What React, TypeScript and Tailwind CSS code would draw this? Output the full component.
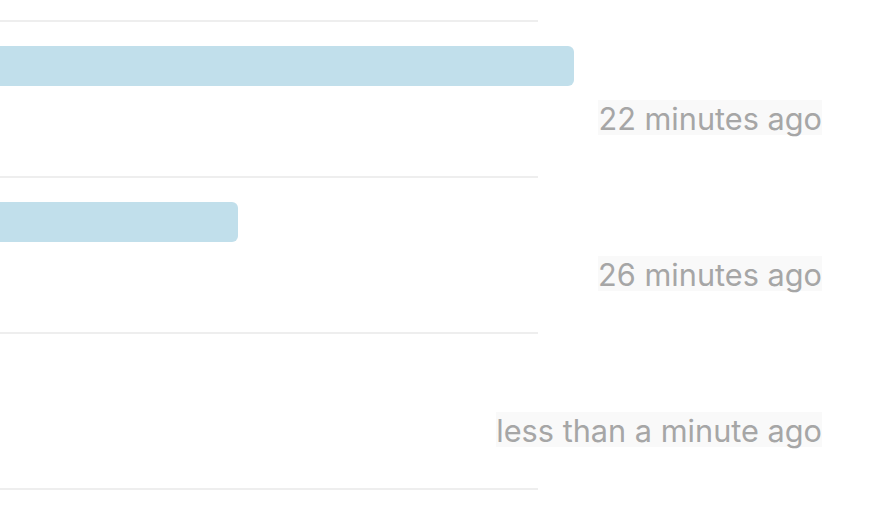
const ROWS = [
  { bar: 574, time: "22 minutes ago" },
  { bar: 238, time: "26 minutes ago" },
  { bar: 0, time: "less than a minute ago" },
];

export default function App() {
  return (
    <div className="w-[878px] h-[530px] overflow-hidden bg-white pt-[20px] font-['Inter',sans-serif]">
      {ROWS.map((r, i) => (
        <div key={i} className="flex flex-col w-[822px] h-[156px]">
          <div className="w-[538px] h-[2px] bg-[#eeeeee]" />
          <div className="mt-[24px] h-[40px]">
            {r.bar > 0 && (
              <div className="h-[40px] bg-[#c1dfeb] rounded-r-[6px]" style={{ width: r.bar }} />
            )}
          </div>
          <div className="mt-[14px] self-end h-[35px] bg-[#f9f9f9] text-[30.7px] leading-[37px] text-[#a6a6a6] whitespace-nowrap">
            {r.time}
          </div>
        </div>
      ))}
      <div className="w-[538px] h-[2px] bg-[#eeeeee]" />
    </div>
  );
}
